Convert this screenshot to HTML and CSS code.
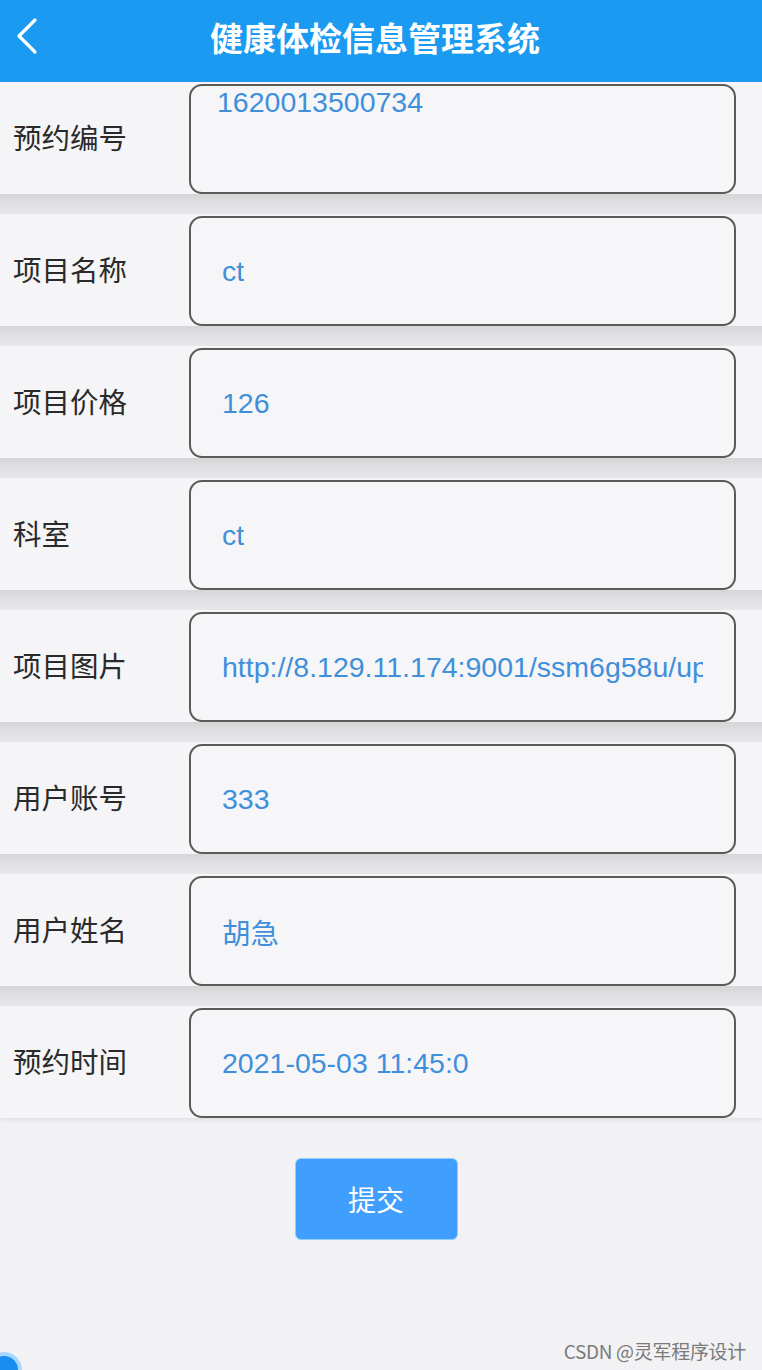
FILE: index.html
```html
<!DOCTYPE html>
<html lang="zh">
<head>
<meta charset="utf-8">
<title>健康体检信息管理系统</title>
<link rel="stylesheet" href="styles.css">
</head>
<body>
<div class="page">
  <header class="bar">
    <svg class="back" width="26" height="38" viewBox="0 0 26 38"><polyline points="22,3 6,19 22,35" fill="none" stroke="#fff" stroke-width="3.2" stroke-linecap="round" stroke-linejoin="round"/></svg>
    <h1 class="title">健康体检信息管理系统</h1>
  </header>
  <main class="form">
    <div class="row"><span class="label">预约编号</span><div class="field field-top"><span class="value value-top">1620013500734</span></div></div>
    <div class="row"><span class="label">项目名称</span><div class="field"><span class="value">ct</span></div></div>
    <div class="row"><span class="label">项目价格</span><div class="field"><span class="value">126</span></div></div>
    <div class="row"><span class="label">科室</span><div class="field"><span class="value">ct</span></div></div>
    <div class="row"><span class="label">项目图片</span><div class="field"><span class="value">http://8.129.11.174:9001/ssm6g58u/upload/1620013471838.jpg</span></div></div>
    <div class="row"><span class="label">用户账号</span><div class="field"><span class="value">333</span></div></div>
    <div class="row"><span class="label">用户姓名</span><div class="field"><span class="value">胡急</span></div></div>
    <div class="row row-last"><span class="label">预约时间</span><div class="field"><span class="value">2021-05-03 11:45:0</span></div></div>
  </main>
  <div class="actions"><button class="submit">提交</button></div>
  <div class="watermark">CSDN @灵军程序设计</div>
  <div class="dot"></div>
</div>
</body>
</html>
```

FILE: styles.css
```css
* { box-sizing: border-box; }
html, body { margin: 0; padding: 0; }
body {
  background: #f2f2f4;
  font-family: "Liberation Sans", "Noto Sans CJK SC", sans-serif;
  width: 762px;
  height: 1370px;
  overflow: hidden;
}
.page { position: relative; height: 1370px; }
.bar {
  height: 82px;
  background: #1b9af1;
  display: flex;
  align-items: center;
  justify-content: center;
  position: relative;
  padding-bottom: 8px;
}
.back { position: absolute; left: 13px; top: 17px; }
.title {
  margin: 0;
  color: #fff;
  font-family: "Noto Sans CJK SC", sans-serif;
  font-weight: 700;
  font-size: 33px;
  padding-right: 12px;
}
.form { display: flex; flex-direction: column; }
.row {
  height: 132px;
  padding: 2px 26px 20px 0;
  display: flex;
  align-items: center;
  background: linear-gradient(to bottom, #f5f5f7 0, #f5f5f7 112px, #d6d6d8 112px, #dedee0 120px, #e8e8ea 132px);
}
.row-last {
  height: 112px;
  padding-bottom: 0;
  background: #f5f5f7;
  box-shadow: 0 2px 4px rgba(0,0,0,0.08);
}
.label {
  width: 189px;
  flex: none;
  padding-left: 13px;
  padding-bottom: 5px;
  font-family: "Noto Sans CJK SC", sans-serif;
  font-size: 28.5px;
  color: #2a2a2a;
}
.field {
  flex: 1;
  height: 110px;
  border: 2px solid #5a5a5a;
  border-radius: 13px;
  background: #f6f6f8;
  display: flex;
  align-items: center;
  padding: 0 31px;
  overflow: hidden;
}
.field-top { align-items: flex-start; padding: 0 26px; }
.value {
  font-family: "Liberation Sans", "Noto Sans CJK SC", sans-serif;
  font-size: 28.5px;
  color: #3f8fdb;
  white-space: nowrap;
  overflow: hidden;
}
.value-top { line-height: 32px; }
.actions {
  display: flex;
  justify-content: center;
  padding-top: 40px;
  padding-right: 10px;
}
.submit {
  width: 163px;
  height: 82px;
  border: 1px solid #8fd0ff;
  border-radius: 6px;
  background: #409eff;
  color: #fff;
  font-family: "Noto Sans CJK SC", sans-serif;
  font-size: 28px;
}
.watermark {
  position: absolute;
  right: 16px;
  bottom: 6px;
  font-family: "Noto Sans CJK SC", sans-serif;
  font-size: 19px;
  color: #7a7a7a;
  letter-spacing: -0.3px;
}
.dot {
  position: absolute;
  left: -10px;
  bottom: -14px;
  width: 28px;
  height: 28px;
  border-radius: 50%;
  background: #1a8ef0;
  box-shadow: 0 0 0 4px #a8d8ff;
}
```
